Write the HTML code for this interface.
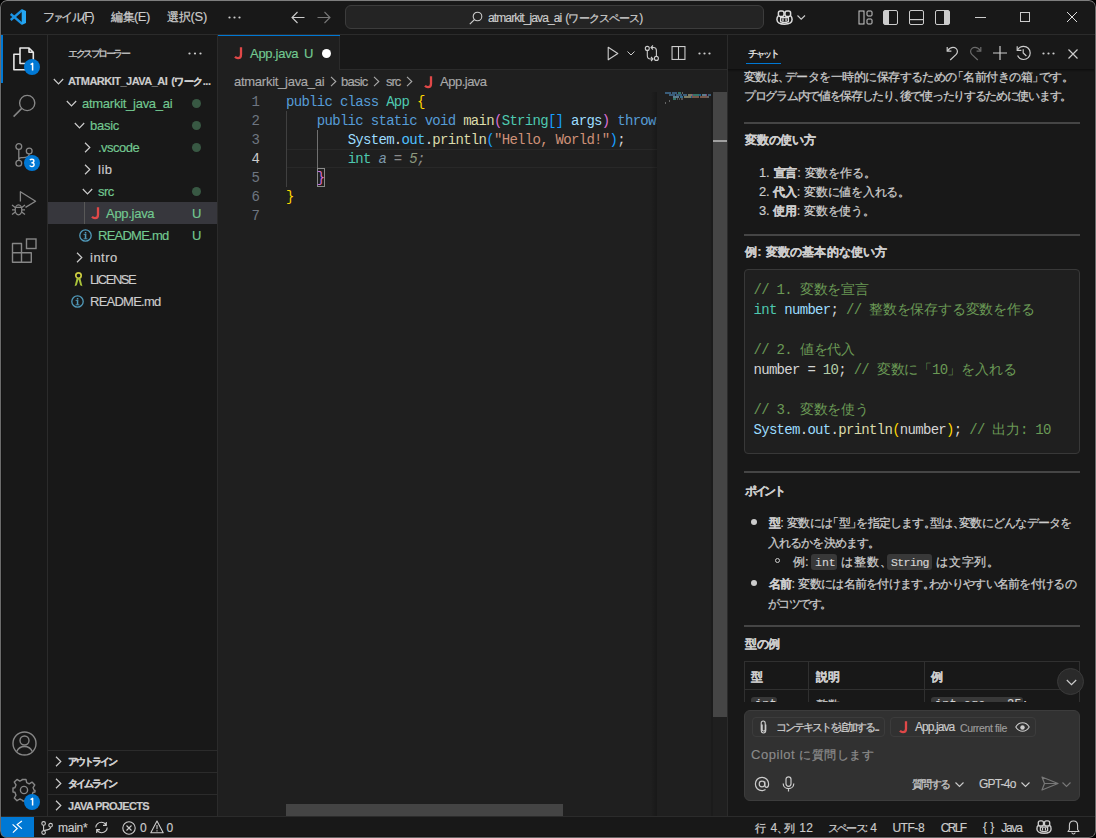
<!DOCTYPE html>
<html lang="ja">
<head>
<meta charset="utf-8">
<style>
html,body{margin:0;padding:0;background:#000;width:1096px;height:838px;overflow:hidden}
body{font-family:'Liberation Sans',sans-serif;font-size:13px;color:#ccc}
#win{position:absolute;left:0;top:0;width:1096px;height:838px;background:#181818;border-radius:7px;overflow:hidden}
.a{position:absolute}
.t{position:absolute;white-space:nowrap;-webkit-text-stroke:0.15px currentColor}
svg{position:absolute;overflow:visible}
.ln{position:absolute;left:222px;width:38px;text-align:right;color:#6e7681}
.j{font-size:0.92em;-webkit-text-stroke:0.25px currentColor}
.jm{font-size:14px;letter-spacing:-0.2px}
.sk{font-size:0.85em}
b .j{-webkit-text-stroke:0.2px currentColor}
.pr{margin-right:-0.4em}
.pl{margin-left:-0.4em}
.code{position:absolute;white-space:pre;font-family:'Liberation Mono',monospace}
</style>
</head>
<body>
<div id="win">
<!-- window frame -->
<div class="a" style="left:0;top:0;width:1096px;height:838px;box-sizing:border-box;border:1px solid #6c6c6c;border-top-color:#7e7e7e;border-bottom-color:#646464;border-radius:7px;z-index:50;pointer-events:none"></div>
<div class="a" style="left:1px;top:1px;width:1094px;height:836px;box-sizing:border-box;border:1px solid #131313;border-top-color:#1a1a1a;border-radius:6px"></div>

<!-- title bar border -->
<div class="a" style="left:0;top:34px;width:1096px;height:1px;background:#2b2b2b"></div>
<!-- activity bar border -->
<div class="a" style="left:47px;top:35px;width:1px;height:781px;background:#2b2b2b"></div>
<!-- sidebar border -->
<div class="a" style="left:217px;top:35px;width:1px;height:781px;background:#2b2b2b"></div>
<!-- editor area bg -->
<div class="a" style="left:218px;top:35px;width:509px;height:781px;background:#1f1f1f"></div>
<!-- tab bar bg -->
<div class="a" style="left:218px;top:35px;width:509px;height:34px;background:#181818;border-bottom:1px solid #2b2b2b"></div>
<!-- active tab -->
<div class="a" style="left:218px;top:35px;width:122px;height:35px;background:#1f1f1f;border-right:1px solid #2b2b2b;box-sizing:border-box"></div>
<div class="a" style="left:218px;top:35px;width:122px;height:1px;background:#0078d4"></div>
<!-- chat border -->
<div class="a" style="left:727px;top:35px;width:1px;height:781px;background:#2b2b2b"></div>
<!-- status bar -->
<div class="a" style="left:0;top:816px;width:1096px;height:1px;background:#2b2b2b"></div>
<div class="a" style="left:1px;top:817px;width:33px;height:21px;background:#0078d4"></div>


<!-- VS Code logo -->
<svg style="left:10px;top:9px" width="16" height="16" viewBox="0 0 16 16">
<path d="M12.2 1.2L0.7 11" stroke="#1b93e3" stroke-width="2.3"/>
<path d="M12.2 14.8L0.7 5" stroke="#1b93e3" stroke-width="2.3"/>
<path d="M11.7 0L16 2V13.9L11.7 16Z" fill="#24a6f2"/>
</svg>
<!-- menu dots -->
<svg style="left:228px;top:16px" width="13" height="3"><circle cx="1.5" cy="1.5" r="1.1" fill="#ccc"/><circle cx="6.5" cy="1.5" r="1.1" fill="#ccc"/><circle cx="11.5" cy="1.5" r="1.1" fill="#ccc"/></svg>
<!-- back / forward -->
<svg style="left:291px;top:11px" width="14" height="13" viewBox="0 0 14 13"><path d="M13.5 6.5H1 M6.5 1L1 6.5L6.5 12" stroke="#ccc" stroke-width="1.1" fill="none"/></svg>
<svg style="left:317px;top:11px" width="14" height="13" viewBox="0 0 14 13"><path d="M0.5 6.5H13 M7.5 1L13 6.5L7.5 12" stroke="#777" stroke-width="1.1" fill="none"/></svg>
<!-- command center -->
<div class="a" style="left:345px;top:5px;width:419px;height:24px;box-sizing:border-box;border:1px solid #3c3c3c;border-radius:6px;background:#242424"></div>
<svg style="left:469px;top:11px" width="14" height="14" viewBox="0 0 14 14"><circle cx="8.5" cy="5.5" r="4.3" stroke="#ccc" stroke-width="1.1" fill="none"/><path d="M5.4 8.6L0.8 13.2" stroke="#ccc" stroke-width="1.2"/></svg>
<!-- copilot icon -->
<svg style="left:776px;top:9.5px" width="17" height="15" viewBox="0 0 17 15">
<rect x="2.4" y="0.9" width="5.6" height="5.6" rx="2" stroke="#ddd" stroke-width="1.5" fill="none"/>
<rect x="9" y="0.9" width="5.6" height="5.6" rx="2" stroke="#ddd" stroke-width="1.5" fill="none"/>
<path d="M2.4 5.8C1.2 6.6 0.9 8 0.9 9.6C0.9 12.6 4.2 14.2 8.5 14.2C12.8 14.2 16.1 12.6 16.1 9.6C16.1 8 15.8 6.6 14.6 5.8" stroke="#ddd" stroke-width="1.5" fill="none"/>
<path d="M4.6 7.6H12.4V11.6C11 12.3 9.8 12.5 8.5 12.5C7.2 12.5 6 12.3 4.6 11.6Z" stroke="#ddd" stroke-width="1.3" fill="none"/>
<rect x="6.3" y="8.4" width="1.3" height="2.8" fill="#ddd"/><rect x="9.4" y="8.4" width="1.3" height="2.8" fill="#ddd"/>
</svg>
<svg style="left:797px;top:15px" width="9" height="5" viewBox="0 0 9 5"><path d="M0.5 0.5L4.2 4.2L8 0.5" stroke="#ccc" stroke-width="1.1" fill="none"/></svg>
<!-- layout icons -->
<svg style="left:858px;top:10px" width="15" height="15" viewBox="0 0 15 15"><rect x="1" y="1" width="5" height="13" stroke="#ccc" fill="none"/><rect x="9" y="1" width="5" height="5" rx="1" stroke="#ccc" fill="none"/><rect x="9" y="9" width="5" height="5" rx="1" stroke="#ccc" fill="none"/></svg>
<svg style="left:883px;top:10px" width="15" height="15" viewBox="0 0 15 15"><rect x="0.5" y="0.5" width="14" height="14" rx="1.5" stroke="#ccc" fill="none"/><rect x="1" y="1" width="5" height="13" fill="#ccc"/></svg>
<svg style="left:909px;top:10px" width="15" height="15" viewBox="0 0 15 15"><rect x="0.5" y="0.5" width="14" height="14" rx="1.5" stroke="#ccc" fill="none"/><rect x="1" y="9" width="13" height="1.2" fill="#ccc"/></svg>
<svg style="left:935px;top:10px" width="15" height="15" viewBox="0 0 15 15"><rect x="0.5" y="0.5" width="14" height="14" rx="1.5" stroke="#ccc" fill="none"/><rect x="9" y="1" width="5" height="13" fill="#ccc"/></svg>
<!-- window controls -->
<div class="a" style="left:975px;top:17px;width:11px;height:1px;background:#ccc"></div>
<div class="a" style="left:1020px;top:12px;width:10px;height:10px;box-sizing:border-box;border:1px solid #ccc"></div>
<svg style="left:1067px;top:12px" width="10" height="10" viewBox="0 0 10 10"><path d="M0 0L10 10M10 0L0 10" stroke="#ddd" stroke-width="1"/></svg>


<!-- activity bar -->
<div class="a" style="left:1px;top:35px;width:2px;height:48px;background:#0078d4"></div>
<svg style="left:12px;top:46px" width="24" height="26" viewBox="0 0 24 26">
<path d="M8 2H17L21.3 6.3V17.5H8Z M17 2V6.3H21.3" stroke="#e6e6e6" stroke-width="1.6" fill="none" stroke-linejoin="round"/>
<path d="M8 8.2H1.9V23.7H15V17.5" stroke="#e6e6e6" stroke-width="1.6" fill="none" stroke-linejoin="round"/>
</svg>
<svg style="left:24px;top:59px" width="16" height="16" viewBox="0 0 16 16"><circle cx="8" cy="8" r="8" fill="#0078d4"/><path d="M6.6 5.6L8.6 4.4V11.6" stroke="#fff" stroke-width="1.5" fill="none" stroke-linejoin="round"/></svg>
<svg style="left:12px;top:94px" width="24" height="26" viewBox="0 0 24 26">
<circle cx="15.2" cy="9" r="7.6" stroke="#868686" stroke-width="1.4" fill="none"/><path d="M9.8 14.4L1.6 22.6" stroke="#868686" stroke-width="1.5"/>
</svg>
<svg style="left:12px;top:142px" width="24" height="26" viewBox="0 0 24 26">
<circle cx="6.8" cy="4.5" r="2.9" stroke="#868686" stroke-width="1.3" fill="none"/>
<circle cx="17.2" cy="9" r="2.9" stroke="#868686" stroke-width="1.3" fill="none"/>
<circle cx="6.8" cy="21.2" r="2.9" stroke="#868686" stroke-width="1.3" fill="none"/>
<path d="M6.8 7.4V18.3 M17.2 11.9C17.2 14.8 15 15.6 11 15.6H9.5C8 15.6 6.8 16.5 6.8 18" stroke="#868686" stroke-width="1.3" fill="none"/>
</svg>
<svg style="left:24px;top:155px" width="16" height="16" viewBox="0 0 16 16"><circle cx="8" cy="8" r="8" fill="#0078d4"/><path d="M5.9 5.2C6.3 4.6 7 4.3 7.9 4.3C9.1 4.3 9.9 5 9.9 6C9.9 7 9.1 7.7 7.8 7.7H7.4 M7.8 7.7C9.3 7.7 10.1 8.5 10.1 9.6C10.1 10.8 9.2 11.6 7.9 11.6C6.9 11.6 6.1 11.2 5.7 10.5" stroke="#fff" stroke-width="1.4" fill="none"/></svg>
<svg style="left:11px;top:190px" width="26" height="27" viewBox="0 0 26 27">
<path d="M9.4 11.6V1.7L24.6 11.2L14.5 17.4" stroke="#868686" stroke-width="1.3" fill="none" stroke-linejoin="round"/>
<ellipse cx="7.5" cy="19.8" rx="3.3" ry="5" stroke="#868686" stroke-width="1.3" fill="none"/>
<path d="M4.5 17.4H10.5 M1 15L4.2 17.4 M1 19.8H4.2 M1 24.5L4.3 22 M14 15L10.8 17.4 M14 19.8H10.8 M14 24.5L10.7 22" stroke="#868686" stroke-width="1.3" fill="none"/>
</svg>
<svg style="left:11px;top:237px" width="26" height="27" viewBox="0 0 26 27">
<path d="M1.5 6.5H10.5V15.8H20.3V25.3H1.5Z M1.5 15.8H10.5V25.3" stroke="#868686" stroke-width="1.4" fill="none" stroke-linejoin="round"/>
<rect x="15.5" y="2" width="9.5" height="9.5" stroke="#868686" stroke-width="1.4" fill="none"/>
</svg>
<svg style="left:12px;top:731px" width="25" height="25" viewBox="0 0 25 25">
<circle cx="12.5" cy="12.5" r="11.5" stroke="#868686" stroke-width="1.4" fill="none"/>
<circle cx="12.5" cy="9.5" r="4.5" stroke="#868686" stroke-width="1.4" fill="none"/>
<path d="M4.8 20.5C6.5 16.5 9 15.5 12.5 15.5C16 15.5 18.5 16.5 20.2 20.5" stroke="#868686" stroke-width="1.4" fill="none"/>
</svg>
<svg style="left:12px;top:778px" width="24" height="24" viewBox="0 0 24 24">
<path d="M10 1.5H14L14.7 4.6L17.2 5.8L20 4.1L22.8 6.9L21.1 9.7L22.1 12.2L23 12.5V14L21.1 14.3L20 17.2L21.7 20L19 22.7L16.2 21L13.7 22.1L13 23H11L10.3 22.1L7.8 21L5 22.7L2.3 20L4 17.2L2.9 14.3L1 14V10L2.9 9.7L4 6.9L2.3 4.1L5 1.4L7.8 3.1L10.3 1.9Z" stroke="#868686" stroke-width="1.4" fill="none" stroke-linejoin="round"/>
<circle cx="12" cy="12" r="3.6" stroke="#868686" stroke-width="1.4" fill="none"/>
</svg>
<svg style="left:24px;top:794px" width="16" height="16" viewBox="0 0 16 16"><circle cx="8" cy="8" r="8" fill="#0078d4"/><path d="M6.6 5.6L8.6 4.4V11.6" stroke="#fff" stroke-width="1.5" fill="none" stroke-linejoin="round"/></svg>


<!-- sidebar -->
<svg style="left:188px;top:52px" width="14" height="3"><circle cx="1.5" cy="1.5" r="1.1" fill="#ccc"/><circle cx="7" cy="1.5" r="1.1" fill="#ccc"/><circle cx="12.5" cy="1.5" r="1.1" fill="#ccc"/></svg>
<div class="a" style="left:48px;top:202px;width:169px;height:22px;background:#37373d"></div>
<div class="a" style="left:84px;top:202px;width:1px;height:22px;background:#585858"></div>
<svg style="left:53px;top:77.5px" width="11" height="7" viewBox="0 0 11 7"><path d="M0.8 1L5.5 5.8L10.2 1" stroke="#ccc" stroke-width="1.2" fill="none"/></svg><svg style="left:65.5px;top:99.5px" width="11" height="7" viewBox="0 0 11 7"><path d="M0.8 1L5.5 5.8L10.2 1" stroke="#ccc" stroke-width="1.2" fill="none"/></svg><svg style="left:74px;top:121.5px" width="11" height="7" viewBox="0 0 11 7"><path d="M0.8 1L5.5 5.8L10.2 1" stroke="#ccc" stroke-width="1.2" fill="none"/></svg><svg style="left:84px;top:141.5px" width="7" height="11" viewBox="0 0 7 11"><path d="M1 0.8L5.8 5.5L1 10.2" stroke="#ccc" stroke-width="1.2" fill="none"/></svg><svg style="left:84px;top:163.5px" width="7" height="11" viewBox="0 0 7 11"><path d="M1 0.8L5.8 5.5L1 10.2" stroke="#ccc" stroke-width="1.2" fill="none"/></svg><svg style="left:82px;top:187.5px" width="11" height="7" viewBox="0 0 11 7"><path d="M0.8 1L5.5 5.8L10.2 1" stroke="#ccc" stroke-width="1.2" fill="none"/></svg><svg style="left:75.5px;top:251.5px" width="7" height="11" viewBox="0 0 7 11"><path d="M1 0.8L5.8 5.5L1 10.2" stroke="#ccc" stroke-width="1.2" fill="none"/></svg><div class="a" style="left:191.5px;top:98.5px;width:9px;height:9px;border-radius:50%;background:rgba(115,201,145,0.36)"></div><div class="a" style="left:191.5px;top:120.5px;width:9px;height:9px;border-radius:50%;background:rgba(115,201,145,0.36)"></div><div class="a" style="left:191.5px;top:142.5px;width:9px;height:9px;border-radius:50%;background:rgba(115,201,145,0.36)"></div><div class="a" style="left:191.5px;top:186.5px;width:9px;height:9px;border-radius:50%;background:rgba(115,201,145,0.36)"></div><svg style="left:91px;top:206px" width="10" height="14" viewBox="0 0 10 14"><path d="M7 1.2V8.8C7 11 5.9 12.2 4 12.2C2.8 12.2 1.8 11.7 1 10.8" stroke="#e04848" stroke-width="2.3" fill="none"/></svg><svg style="left:78.8px;top:228.5px" width="13" height="13" viewBox="0 0 13 13"><circle cx="6.5" cy="6.5" r="5.7" stroke="#519aba" stroke-width="1.3" fill="none"/><rect x="5.8" y="5.4" width="1.5" height="4.4" fill="#519aba"/><rect x="5.8" y="3" width="1.5" height="1.5" fill="#519aba"/><path d="M4.6 5.4H7.3 M4.6 9.8H8.4" stroke="#519aba" stroke-width="0.9"/></svg><svg style="left:71px;top:294.5px" width="13" height="13" viewBox="0 0 13 13"><circle cx="6.5" cy="6.5" r="5.7" stroke="#519aba" stroke-width="1.3" fill="none"/><rect x="5.8" y="5.4" width="1.5" height="4.4" fill="#519aba"/><rect x="5.8" y="3" width="1.5" height="1.5" fill="#519aba"/><path d="M4.6 5.4H7.3 M4.6 9.8H8.4" stroke="#519aba" stroke-width="0.9"/></svg><svg style="left:73.5px;top:271.5px" width="9" height="15" viewBox="0 0 9 15"><circle cx="4.5" cy="3.6" r="2.7" stroke="#cbcb41" stroke-width="1.7" fill="none"/><path d="M2.6 6.2L0.6 14.2L2.8 13.2L4.5 7.2L6.2 13.2L8.4 14.2L6.4 6.2Z" fill="#a8c23a"/></svg>
<div class="a" style="left:48px;top:750px;width:169px;height:1px;background:#2b2b2b"></div>
<div class="a" style="left:48px;top:772px;width:169px;height:1px;background:#2b2b2b"></div>
<div class="a" style="left:48px;top:794px;width:169px;height:1px;background:#2b2b2b"></div>
<svg style="left:55px;top:756.0px" width="7" height="11" viewBox="0 0 7 11"><path d="M1 0.8L5.8 5.5L1 10.2" stroke="#ccc" stroke-width="1.2" fill="none"/></svg><svg style="left:55px;top:778.0px" width="7" height="11" viewBox="0 0 7 11"><path d="M1 0.8L5.8 5.5L1 10.2" stroke="#ccc" stroke-width="1.2" fill="none"/></svg><svg style="left:55px;top:800.0px" width="7" height="11" viewBox="0 0 7 11"><path d="M1 0.8L5.8 5.5L1 10.2" stroke="#ccc" stroke-width="1.2" fill="none"/></svg>

<!-- editor tab -->
<svg style="left:234px;top:46px" width="10" height="14" viewBox="0 0 10 14"><path d="M7 1.2V8.8C7 11 5.9 12.2 4 12.2C2.8 12.2 1.8 11.7 1 10.8" stroke="#e04848" stroke-width="2.3" fill="none"/></svg><div class="a" style="left:321.5px;top:48.5px;width:9px;height:9px;border-radius:50%;background:#fff"></div>
<svg style="left:607px;top:46px" width="12" height="15" viewBox="0 0 12 15"><path d="M1.2 1.2L10.8 7.5L1.2 13.8Z" stroke="#ccc" stroke-width="1.1" fill="none" stroke-linejoin="round"/></svg>
<svg style="left:627px;top:51px" width="8" height="5" viewBox="0 0 8 5"><path d="M0.5 0.5L4 4L7.5 0.5" stroke="#ccc" stroke-width="1" fill="none"/></svg>
<svg style="left:644px;top:44px" width="16" height="18" viewBox="0 0 16 18">
<circle cx="3.3" cy="4.4" r="2" stroke="#ccc" stroke-width="1.1" fill="none"/><circle cx="12.4" cy="14.4" r="2" stroke="#ccc" stroke-width="1.1" fill="none"/>
<path d="M3.3 6.4V11.5C3.3 13.5 4.3 15 6.5 15H9 M7 13L9 15L7 17" stroke="#ccc" stroke-width="1.1" fill="none"/>
<path d="M12.4 12.4V6.5C12.4 4.5 11.4 3.5 9.5 3.5H7 M9 1.5L7 3.5L9 5.5" stroke="#ccc" stroke-width="1.1" fill="none"/>
</svg>
<svg style="left:671px;top:46px" width="15" height="14" viewBox="0 0 15 14"><rect x="1.05" y="0.55" width="12.9" height="12.9" stroke="#ccc" stroke-width="1.1" fill="none"/><path d="M7.5 0.5V13.5" stroke="#ccc" stroke-width="1.1"/></svg>
<svg style="left:698px;top:52px" width="13" height="3"><circle cx="1.5" cy="1.5" r="1.1" fill="#ccc"/><circle cx="6.5" cy="1.5" r="1.1" fill="#ccc"/><circle cx="11.5" cy="1.5" r="1.1" fill="#ccc"/></svg>
<svg style="left:329.5px;top:76.0px" width="7" height="11" viewBox="0 0 7 11"><path d="M1 0.8L5.8 5.5L1 10.2" stroke="#a9a9a9" stroke-width="1.1" fill="none"/></svg><svg style="left:373px;top:76.0px" width="7" height="11" viewBox="0 0 7 11"><path d="M1 0.8L5.8 5.5L1 10.2" stroke="#a9a9a9" stroke-width="1.1" fill="none"/></svg><svg style="left:406px;top:76.0px" width="7" height="11" viewBox="0 0 7 11"><path d="M1 0.8L5.8 5.5L1 10.2" stroke="#a9a9a9" stroke-width="1.1" fill="none"/></svg><svg style="left:424px;top:74.5px" width="10" height="14" viewBox="0 0 10 14"><path d="M7 1.2V8.8C7 11 5.9 12.2 4 12.2C2.8 12.2 1.8 11.7 1 10.8" stroke="#e04848" stroke-width="2.3" fill="none"/></svg><div class="a" style="left:286px;top:149px;width:371px;height:17px;border-top:1px solid #282828;border-bottom:1px solid #282828"></div><div class="a" style="left:286px;top:111px;width:1px;height:76px;background:#404040"></div><div class="a" style="left:317px;top:130px;width:1px;height:38px;background:#707070"></div><div class="a" style="left:317px;top:168px;width:8px;height:19px;box-sizing:border-box;border:1px solid #8a8a8a"></div><div class="ln code" style="top:92.5px;line-height:19px;font-size:14px;color:#6e7681">1</div><div class="ln code" style="top:111.5px;line-height:19px;font-size:14px;color:#6e7681">2</div><div class="ln code" style="top:130.5px;line-height:19px;font-size:14px;color:#6e7681">3</div><div class="ln code" style="top:149.5px;line-height:19px;font-size:14px;color:#cccccc">4</div><div class="ln code" style="top:168.5px;line-height:19px;font-size:14px;color:#6e7681">5</div><div class="ln code" style="top:187.5px;line-height:19px;font-size:14px;color:#6e7681">6</div><div class="ln code" style="top:206.5px;line-height:19px;font-size:14px;color:#6e7681">7</div><div class="code" style="left:286px;top:92.5px;width:371px;height:160px;overflow:hidden;font-size:14px;letter-spacing:-0.7px;line-height:19px;color:#d4d4d4"><span style="color:#569cd6">public</span> <span style="color:#569cd6">class</span> <span style="color:#4ec9b0">App</span> <span style="color:#ffd700">{</span>
    <span style="color:#569cd6">public</span> <span style="color:#569cd6">static</span> <span style="color:#569cd6">void</span> <span style="color:#dcdcaa">main</span><span style="color:#da70d6">(</span><span style="color:#4ec9b0">String</span><span style="color:#179fff">[]</span> <span style="color:#9cdcfe">args</span><span style="color:#da70d6">)</span> <span style="color:#569cd6">throws</span>
        <span style="color:#9cdcfe">System</span><span style="color:#d4d4d4">.</span><span style="color:#4fc1ff">out</span><span style="color:#d4d4d4">.</span><span style="color:#dcdcaa">println</span><span style="color:#179fff">(</span><span style="color:#ce9178">"Hello, World!"</span><span style="color:#179fff">)</span><span style="color:#d4d4d4">;</span>
        <span style="color:#4ec9b0">int</span><span style="font-style:italic;color:#8a8a8a"> <span style="color:#7d99ab">a</span> = <span style="color:#8d9a7e">5</span>;</span>
    <span style="color:#da70d6">}</span>
<span style="color:#ffd700">}</span>
</div><div class="a" style="left:651px;top:92px;width:6px;height:724px;background:linear-gradient(to right,rgba(0,0,0,0),rgba(0,0,0,0.22))"></div><div class="a" style="left:665px;top:92px;width:6px;height:2px;background:#569cd6;opacity:.5"></div><div class="a" style="left:672px;top:92px;width:5px;height:2px;background:#569cd6;opacity:.5"></div><div class="a" style="left:678px;top:92px;width:3px;height:2px;background:#4ec9b0;opacity:.5"></div><div class="a" style="left:682px;top:92px;width:1px;height:2px;background:#aaa;opacity:.5"></div><div class="a" style="left:669px;top:94px;width:6px;height:2px;background:#569cd6;opacity:.5"></div><div class="a" style="left:676px;top:94px;width:6px;height:2px;background:#569cd6;opacity:.5"></div><div class="a" style="left:683px;top:94px;width:4px;height:2px;background:#569cd6;opacity:.5"></div><div class="a" style="left:688px;top:94px;width:4px;height:2px;background:#dcdcaa;opacity:.5"></div><div class="a" style="left:692px;top:94px;width:1px;height:2px;background:#da70d6;opacity:.5"></div><div class="a" style="left:693px;top:94px;width:6px;height:2px;background:#4ec9b0;opacity:.5"></div><div class="a" style="left:699px;top:94px;width:2px;height:2px;background:#179fff;opacity:.5"></div><div class="a" style="left:702px;top:94px;width:4px;height:2px;background:#9cdcfe;opacity:.5"></div><div class="a" style="left:706px;top:94px;width:1px;height:2px;background:#da70d6;opacity:.5"></div><div class="a" style="left:708px;top:94px;width:5px;height:2px;background:#569cd6;opacity:.5"></div><div class="a" style="left:673px;top:96px;width:6px;height:2px;background:#9cdcfe;opacity:.5"></div><div class="a" style="left:680px;top:96px;width:3px;height:2px;background:#4fc1ff;opacity:.5"></div><div class="a" style="left:684px;top:96px;width:7px;height:2px;background:#dcdcaa;opacity:.5"></div><div class="a" style="left:691px;top:96px;width:1px;height:2px;background:#179fff;opacity:.5"></div><div class="a" style="left:692px;top:96px;width:7px;height:2px;background:#ce9178;opacity:.5"></div><div class="a" style="left:700px;top:96px;width:7px;height:2px;background:#ce9178;opacity:.5"></div><div class="a" style="left:707px;top:96px;width:2px;height:2px;background:#aaa;opacity:.5"></div><div class="a" style="left:673px;top:98px;width:3px;height:2px;background:#4ec9b0;opacity:.5"></div><div class="a" style="left:677px;top:98px;width:1px;height:2px;background:#888;opacity:.5"></div><div class="a" style="left:679px;top:98px;width:1px;height:2px;background:#888;opacity:.5"></div><div class="a" style="left:681px;top:98px;width:1px;height:2px;background:#888;opacity:.5"></div><div class="a" style="left:682px;top:98px;width:1px;height:2px;background:#888;opacity:.5"></div><div class="a" style="left:669px;top:100px;width:1px;height:2px;background:#aaa;opacity:.5"></div><div class="a" style="left:665px;top:102px;width:1px;height:2px;background:#aaa;opacity:.5"></div>
<div class="a" style="left:711px;top:92px;width:2px;height:724px;background:#1b1b1b"></div><div class="a" style="left:713px;top:92px;width:14px;height:625px;background:#454545"></div><div class="a" style="left:713px;top:140px;width:14px;height:2px;background:#a0a0a0"></div><div class="a" style="left:286px;top:804px;width:277px;height:12px;background:#444444"></div>

<!-- chat header -->
<div class="a" style="left:728px;top:69px;width:366px;height:3px;background:linear-gradient(to bottom,rgba(0,0,0,.45),rgba(0,0,0,0))"></div>
<div class="a" style="left:728px;top:35px;width:366px;height:34px;background:#181818"></div>
<div class="a" style="left:746px;top:63px;width:35px;height:1px;background:#0078d4"></div>
<svg style="left:946px;top:46px" width="13" height="15" viewBox="0 0 13 15"><path d="M1.2 1V5.2H5.4" stroke="#ccc" stroke-width="1.2" fill="none"/><path d="M1.5 4.8C3 2.6 4.8 1.4 7 1.4C9.6 1.4 11.4 3.3 11.4 5.6C11.4 6.7 10.9 7.6 10.2 8.4L4.2 14" stroke="#ccc" stroke-width="1.2" fill="none"/></svg>
<svg style="left:969px;top:46px" width="13" height="15" viewBox="0 0 13 15"><g transform="translate(13,0) scale(-1,1)"><path d="M1.2 1V5.2H5.4" stroke="#6b6b6b" stroke-width="1.2" fill="none"/><path d="M1.5 4.8C3 2.6 4.8 1.4 7 1.4C9.6 1.4 11.4 3.3 11.4 5.6C11.4 6.7 10.9 7.6 10.2 8.4L4.2 14" stroke="#6b6b6b" stroke-width="1.2" fill="none"/></g></svg>
<svg style="left:993px;top:46px" width="14" height="14" viewBox="0 0 14 14"><path d="M7 0V14 M0 7H14" stroke="#ccc" stroke-width="1.2"/></svg>
<svg style="left:1016px;top:45px" width="16" height="16" viewBox="0 0 16 16"><path d="M1.6 4.8C2.8 2.6 5 1.3 7.6 1.3C11.3 1.3 14.2 4.2 14.2 7.9C14.2 11.6 11.3 14.5 7.6 14.5C4.8 14.5 2.6 12.9 1.6 10.6" stroke="#ccc" stroke-width="1.2" fill="none"/><path d="M1.2 1.2V5.4H5.4" stroke="#ccc" stroke-width="1.2" fill="none"/><path d="M7.2 4.2V8L10.4 11" stroke="#ccc" stroke-width="1.2" fill="none"/></svg>
<svg style="left:1042px;top:51.5px" width="13" height="3"><circle cx="1.5" cy="1.5" r="1.1" fill="#ccc"/><circle cx="6.5" cy="1.5" r="1.1" fill="#ccc"/><circle cx="11.5" cy="1.5" r="1.1" fill="#ccc"/></svg>
<svg style="left:1068px;top:48.5px" width="10" height="10" viewBox="0 0 10 10"><path d="M0.5 0.5L9.5 9.5M9.5 0.5L0.5 9.5" stroke="#ccc" stroke-width="1.2"/></svg>
<!-- chat content -->
<div class="a" style="left:744px;top:121.5px;width:336px;height:2px;background:#454545"></div>
<div class="a" style="left:744px;top:233.5px;width:336px;height:2px;background:#454545"></div>
<div class="a" style="left:744px;top:470.5px;width:336px;height:2px;background:#454545"></div>
<div class="a" style="left:744px;top:625px;width:336px;height:2px;background:#454545"></div>
<div class="a" style="left:744px;top:269px;width:336px;height:185px;box-sizing:border-box;border:1px solid #383838;border-radius:4px;background:#1f1f1f"></div>
<div class="a" style="left:751px;top:519px;width:6px;height:6px;border-radius:50%;background:#ccc"></div>
<div class="a" style="left:751px;top:580px;width:6px;height:6px;border-radius:50%;background:#ccc"></div>
<div class="a" style="left:774.5px;top:557.5px;width:5px;height:5px;border-radius:50%;box-sizing:border-box;border:1px solid #ccc"></div>
<div class="a" style="left:811px;top:554px;width:26px;height:16px;border-radius:3px;background:#383838"></div>
<div class="a" style="left:887px;top:554px;width:45px;height:16px;border-radius:3px;background:#383838"></div>
<!-- table -->
<div class="a" style="left:744px;top:661px;width:336px;height:41px;overflow:hidden">
<div class="a" style="left:0;top:0;width:336px;height:60px;box-sizing:border-box;border:1px solid #303030"></div>
<div class="a" style="left:0;top:28px;width:336px;height:1px;background:#303030"></div>
<div class="a" style="left:64px;top:0;width:1px;height:60px;background:#303030"></div>
<div class="a" style="left:180px;top:0;width:1px;height:60px;background:#303030"></div>
<div class="a" style="left:7px;top:36px;width:26px;height:16px;border-radius:3px;background:#383838"></div>
<div class="a" style="left:187px;top:36px;width:92px;height:16px;border-radius:3px;background:#383838"></div>
<div class="t" style="left:11px;top:37px;font-family:'Liberation Mono',monospace;font-size:12px;color:#d4d4d4">int</div>
<div class="t" style="left:72px;top:36px;color:#ccc"><span class="j">整数</span></div>
<div class="t" style="left:191px;top:37px;font-family:'Liberation Mono',monospace;font-size:12px;color:#d4d4d4">int age = 25;</div>
</div>
<!-- header shadow -->

<!-- scroll down button -->
<div class="a" style="left:1057px;top:668px;width:27px;height:27px;box-sizing:border-box;border-radius:50%;background:#2a2a2a;border:1px solid #3a3a3a"></div>
<svg style="left:1065.5px;top:678.5px" width="11" height="7" viewBox="0 0 11 7"><path d="M0.8 1L5.5 5.6L10.2 1" stroke="#ccc" stroke-width="1.2" fill="none"/></svg>
<!-- input -->
<div class="a" style="left:744px;top:710px;width:336px;height:91px;box-sizing:border-box;border:1px solid #3c3c3c;border-radius:6px;background:#313131"></div>
<div class="a" style="left:751.5px;top:717px;width:133px;height:20px;box-sizing:border-box;border:1px solid #3c3c3c;border-radius:4px"></div>
<div class="a" style="left:889.5px;top:717px;width:146px;height:20px;box-sizing:border-box;border:1px solid #3c3c3c;border-radius:4px"></div>
<svg style="left:759px;top:720px" width="9" height="14" viewBox="0 0 9 14"><path d="M6.8 4.5V10C6.8 11.8 5.9 13 4.5 13C3.1 13 2.2 11.8 2.2 10V3.3C2.2 2 3 1 4.2 1C5.4 1 6.2 2 6.2 3.3V9.6C6.2 10.4 5.6 11 4.6 11C3.6 11 3.2 10.4 3.2 9.6V4.5" stroke="#ccc" stroke-width="1.1" fill="none"/></svg>
<svg style="left:899px;top:720px" width="10" height="14" viewBox="0 0 10 14"><path d="M7 1.2V8.8C7 11 5.9 12.2 4 12.2C2.8 12.2 1.8 11.7 1 10.8" stroke="#e04848" stroke-width="2.3" fill="none"/></svg>
<svg style="left:1015px;top:722px" width="15" height="10" viewBox="0 0 15 10"><path d="M0.8 5C2.5 2 4.8 0.8 7.5 0.8C10.2 0.8 12.5 2 14.2 5C12.5 8 10.2 9.2 7.5 9.2C4.8 9.2 2.5 8 0.8 5Z" stroke="#ccc" stroke-width="1.1" fill="none"/><circle cx="7.5" cy="5.5" r="2.2" fill="#ccc"/></svg>
<svg style="left:754px;top:776px" width="16" height="16" viewBox="0 0 16 16"><circle cx="8" cy="8" r="2.8" stroke="#ccc" stroke-width="1.2" fill="none"/><path d="M10.8 5.5V9.3C10.8 10.6 11.6 11.3 12.6 11.3C13.8 11.3 14.6 10 14.6 8C14.6 4.2 11.8 1.4 8 1.4C4.2 1.4 1.4 4.2 1.4 8C1.4 11.8 4.2 14.6 8 14.6C9.4 14.6 10.5 14.3 11.5 13.6" stroke="#ccc" stroke-width="1.2" fill="none"/></svg>
<svg style="left:782px;top:776px" width="13" height="16" viewBox="0 0 13 16"><rect x="4" y="0.8" width="5" height="9.5" rx="2.5" stroke="#ccc" stroke-width="1.2" fill="none"/><path d="M1.2 7.5C1.2 10.5 3.5 12.6 6.5 12.6C9.5 12.6 11.8 10.5 11.8 7.5 M6.5 12.6V15.5" stroke="#ccc" stroke-width="1.2" fill="none"/></svg>
<svg style="left:955px;top:781.5px" width="9" height="5" viewBox="0 0 9 5"><path d="M0.5 0.5L4.5 4.5L8.5 0.5" stroke="#ccc" stroke-width="1.1" fill="none"/></svg>
<svg style="left:1021px;top:781.5px" width="9" height="5" viewBox="0 0 9 5"><path d="M0.5 0.5L4.5 4.5L8.5 0.5" stroke="#ccc" stroke-width="1.1" fill="none"/></svg>
<svg style="left:1041px;top:776px" width="18" height="15" viewBox="0 0 18 15"><path d="M1 1L17 7.5L1 14L3.5 7.5Z M3.5 7.5H17" stroke="#777" stroke-width="1.2" fill="none" stroke-linejoin="round"/></svg>
<svg style="left:1062px;top:781.5px" width="9" height="5" viewBox="0 0 9 5"><path d="M0.5 0.5L4.5 4.5L8.5 0.5" stroke="#777" stroke-width="1.1" fill="none"/></svg>


<!-- status bar icons -->
<svg style="left:11px;top:819px" width="13" height="16" viewBox="0 0 13 16"><path d="M1.6 5.4L6.2 9.5L1.9 13.6 M10.9 2L6.2 5.6L10.9 9.7" stroke="#fff" stroke-width="1.2" fill="none"/></svg>
<svg style="left:41px;top:821px" width="12" height="14" viewBox="0 0 12 14"><circle cx="2.6" cy="2.4" r="1.8" stroke="#ccc" stroke-width="1.1" fill="none"/><circle cx="2.6" cy="11.6" r="1.8" stroke="#ccc" stroke-width="1.1" fill="none"/><circle cx="9.6" cy="4.2" r="1.8" stroke="#ccc" stroke-width="1.1" fill="none"/><path d="M2.6 4.2V9.8 M9.6 6C9.6 8.2 8 8.8 2.8 9.6" stroke="#ccc" stroke-width="1.1" fill="none"/></svg>
<svg style="left:94px;top:821px" width="15" height="13" viewBox="0 0 15 13"><path d="M1.8 6.5C1.8 3.6 4.3 1.3 7.3 1.3C9.4 1.3 11.1 2.3 12 3.9 M13.2 6.5C13.2 9.4 10.7 11.7 7.7 11.7C5.6 11.7 3.9 10.7 3 9.1 M12.3 1V4.4H9 M2.7 12V8.6H6" stroke="#ccc" stroke-width="1.1" fill="none"/></svg>
<svg style="left:122px;top:821px" width="14" height="14" viewBox="0 0 14 14"><circle cx="7" cy="7" r="6.2" stroke="#ccc" stroke-width="1.1" fill="none"/><path d="M4.5 4.5L9.5 9.5M9.5 4.5L4.5 9.5" stroke="#ccc" stroke-width="1.1"/></svg>
<svg style="left:150px;top:820px" width="14" height="14" viewBox="0 0 14 14"><path d="M7 1L13.2 12.8H0.8Z" stroke="#ccc" stroke-width="1.1" fill="none" stroke-linejoin="round"/><path d="M7 5V9.3 M7 10.3V11.5" stroke="#ccc" stroke-width="1.1"/></svg>
<svg style="left:1036px;top:820px" width="16" height="14" viewBox="0 0 17 15" >
<rect x="2.4" y="0.9" width="5.6" height="5.6" rx="2" stroke="#ccc" stroke-width="1.5" fill="none"/>
<rect x="9" y="0.9" width="5.6" height="5.6" rx="2" stroke="#ccc" stroke-width="1.5" fill="none"/>
<path d="M2.4 5.8C1.2 6.6 0.9 8 0.9 9.6C0.9 12.6 4.2 14.2 8.5 14.2C12.8 14.2 16.1 12.6 16.1 9.6C16.1 8 15.8 6.6 14.6 5.8" stroke="#ccc" stroke-width="1.5" fill="none"/>
<path d="M4.6 7.6H12.4V11.6C11 12.3 9.8 12.5 8.5 12.5C7.2 12.5 6 12.3 4.6 11.6Z" stroke="#ccc" stroke-width="1.3" fill="none"/>
<rect x="6.3" y="8.4" width="1.3" height="2.8" fill="#ccc"/><rect x="9.4" y="8.4" width="1.3" height="2.8" fill="#ccc"/>
</svg>
<svg style="left:1067px;top:820px" width="13" height="15" viewBox="0 0 13 15"><path d="M6.5 1C9 1 10.6 2.8 10.6 5.5V9.5L12 11.5H1L2.4 9.5V5.5C2.4 2.8 4 1 6.5 1Z M4.8 12.5C5 13.5 5.7 14 6.5 14C7.3 14 8 13.5 8.2 12.5" stroke="#ccc" stroke-width="1.1" fill="none" stroke-linejoin="round"/></svg>

<div class="code" style="left:753.5px;top:280.0px;height:20px;font-size:14px;letter-spacing:-0.7px;line-height:20px;color:#d4d4d4"><span style="color:#6a9955">// 1. <span class="jm">変数を宣言</span></span></div>
<div class="code" style="left:753.5px;top:300.0px;height:20px;font-size:14px;letter-spacing:-0.7px;line-height:20px;color:#d4d4d4"><span style="color:#4ec9b0">int</span> <span style="color:#9cdcfe">number</span>; <span style="color:#6a9955">// <span class="jm">整数を保存する変数を作る</span></span></div>
<div class="code" style="left:753.5px;top:340.0px;height:20px;font-size:14px;letter-spacing:-0.7px;line-height:20px;color:#d4d4d4"><span style="color:#6a9955">// 2. <span class="jm">値を代入</span></span></div>
<div class="code" style="left:753.5px;top:360.0px;height:20px;font-size:14px;letter-spacing:-0.7px;line-height:20px;color:#d4d4d4"><span style="color:#d4d4d4">number</span> = <span style="color:#b5cea8">10</span>; <span style="color:#6a9955">// <span class="jm">変数に「</span>10<span class="jm">」を入れる</span></span></div>
<div class="code" style="left:753.5px;top:400.0px;height:20px;font-size:14px;letter-spacing:-0.7px;line-height:20px;color:#d4d4d4"><span style="color:#6a9955">// 3. <span class="jm">変数を使う</span></span></div>
<div class="code" style="left:753.5px;top:420.0px;height:20px;font-size:14px;letter-spacing:-0.7px;line-height:20px;color:#d4d4d4"><span style="color:#9cdcfe">System</span>.<span style="color:#9cdcfe">out</span>.<span style="color:#dcdcaa">println</span><span style="color:#ffd700">(</span><span style="color:#d4d4d4">number</span><span style="color:#ffd700">)</span>; <span style="color:#6a9955">// <span class="jm">出力</span>: 10</span></div>

<div class="t" id="t0" style="left:43.00px;top:9.0px;line-height:16px;letter-spacing:-1.833px;color:#ccc"><span class="j">フ<span class="sk">ァ</span>イル</span>(F)</div>
<div class="t" id="t1" style="left:111.00px;top:9.0px;line-height:16px;letter-spacing:-0.500px;color:#ccc"><span class="j">編集</span>(E)</div>
<div class="t" id="t2" style="left:167.00px;top:9.0px;line-height:16px;letter-spacing:-0.250px;color:#ccc"><span class="j">選択</span>(S)</div>
<div class="t" id="t3" style="left:488.00px;top:9.5px;line-height:16px;letter-spacing:-0.880px;color:#ccc;font-size:12px">atmarkit_java_ai<span style="display:inline-block;width:4px"></span>(<span class="j">ワークスペース</span>)</div>
<div class="t" id="t4" style="left:68.00px;top:45.0px;line-height:16px;letter-spacing:-2.429px;color:#ccc;font-size:11px"><span class="j">エクスプローラー</span></div>
<div class="t" id="t5" style="left:68.00px;top:73.0px;line-height:16px;letter-spacing:-0.522px;color:#ccc;font-size:11px;font-weight:bold">ATMARKIT_JAVA_AI<span style="display:inline-block;width:4px"></span>(<span class="j">ワーク</span>...</div>
<div class="t" id="t6" style="left:82.00px;top:96.0px;line-height:16px;letter-spacing:-0.267px;color:#73c991">atmarkit_java_ai</div>
<div class="t" id="t7" style="left:90.00px;top:118.0px;line-height:16px;letter-spacing:-0.250px;color:#73c991">basic</div>
<div class="t" id="t8" style="left:98.00px;top:140.0px;line-height:16px;letter-spacing:-0.500px;color:#73c991">.vscode</div>
<div class="t" id="t9" style="left:98.00px;top:162.0px;line-height:16px;letter-spacing:0.500px;color:#ccc">lib</div>
<div class="t" id="t10" style="left:98.00px;top:184.0px;line-height:16px;letter-spacing:-0.500px;color:#73c991">src</div>
<div class="t" id="t11" style="left:106.00px;top:206.0px;line-height:16px;letter-spacing:-0.286px;color:#73c991">App.java</div>
<div class="t" id="t12" style="left:192.00px;top:206.0px;line-height:16px;color:#73c991">U</div>
<div class="t" id="t13" style="left:98.00px;top:228.0px;line-height:16px;letter-spacing:-0.750px;color:#73c991">README.md</div>
<div class="t" id="t14" style="left:192.00px;top:228.0px;line-height:16px;color:#73c991">U</div>
<div class="t" id="t15" style="left:90.00px;top:250.0px;line-height:16px;letter-spacing:0.500px;color:#ccc">intro</div>
<div class="t" id="t16" style="left:90.00px;top:272.0px;line-height:16px;letter-spacing:-1.500px;color:#ccc">LICENSE</div>
<div class="t" id="t17" style="left:90.00px;top:294.0px;line-height:16px;letter-spacing:-0.750px;color:#ccc">README.md</div>
<div class="t" id="t18" style="left:68.00px;top:753.0px;line-height:16px;letter-spacing:-2.000px;color:#ccc;font-size:11px;font-weight:bold"><span class="j">アウトライン</span></div>
<div class="t" id="t19" style="left:68.00px;top:775.0px;line-height:16px;letter-spacing:-2.000px;color:#ccc;font-size:11px;font-weight:bold"><span class="j">タイムライン</span></div>
<div class="t" id="t20" style="left:68.00px;top:798.0px;line-height:16px;letter-spacing:-0.667px;color:#ccc;font-size:11px;font-weight:bold">JAVA PROJECTS</div>
<div class="t" id="t21" style="left:250.00px;top:46.0px;line-height:16px;letter-spacing:-0.286px;color:#73c991">App.java</div>
<div class="t" id="t22" style="left:304.00px;top:46.0px;line-height:16px;color:#73c991">U</div>
<div class="t" id="t23" style="left:234.00px;top:74.0px;line-height:16px;letter-spacing:-0.267px;color:#a9a9a9">atmarkit_java_ai</div>
<div class="t" id="t24" style="left:341.00px;top:74.0px;line-height:16px;letter-spacing:-0.750px;color:#a9a9a9">basic</div>
<div class="t" id="t25" style="left:386.00px;top:74.0px;line-height:16px;letter-spacing:-1.000px;color:#a9a9a9">src</div>
<div class="t" id="t26" style="left:440.00px;top:74.0px;line-height:16px;letter-spacing:-0.500px;color:#a9a9a9">App.java</div>
<div class="t" id="t27" style="left:748.00px;top:45.0px;line-height:16px;letter-spacing:-2.000px;color:#e7e7e7;font-size:11px"><span class="j">チ<span class="sk">ャ</span><span class="sk">ッ</span>ト</span></div>
<div class="t" id="t28" style="left:744.00px;top:67.0px;line-height:19px;letter-spacing:-0.552px;color:#cccccc"><span class="j">変数は<span class="pr">、</span>データを一時的に保存するための<span class="pl">「</span>名前付きの箱<span class="pr">」</span>です<span class="pr">。</span></span></div>
<div class="t" id="t29" style="left:744.00px;top:86.0px;line-height:19px;letter-spacing:-1.300px;color:#cccccc"><span class="j">プログラム内で値を保存したり<span class="pr">、</span>後で使ったりするために使います<span class="pr">。</span></span></div>
<div class="t" id="t30" style="left:745.00px;top:129.5px;line-height:19px;letter-spacing:-0.200px;color:#cccccc"><b><span class="j">変数の使い方</span></b></div>
<div class="t" id="t31" style="left:759.00px;top:162.5px;line-height:19px;letter-spacing:-0.167px;color:#cccccc">1.<span style="display:inline-block;width:4px"></span><b><span class="j">宣言</span></b>:<span style="display:inline-block;width:4px"></span><span class="j">変数を作る<span class="pr">。</span></span></div>
<div class="t" id="t32" style="left:759.00px;top:181.5px;line-height:19px;letter-spacing:-0.267px;color:#cccccc">2.<span style="display:inline-block;width:4px"></span><b><span class="j">代入</span></b>:<span style="display:inline-block;width:4px"></span><span class="j">変数に値を入れる<span class="pr">。</span></span></div>
<div class="t" id="t33" style="left:759.00px;top:200.5px;line-height:19px;letter-spacing:-0.250px;color:#cccccc">3.<span style="display:inline-block;width:4px"></span><b><span class="j">使用</span></b>:<span style="display:inline-block;width:4px"></span><span class="j">変数を使う<span class="pr">。</span></span></div>
<div class="t" id="t34" style="left:745.00px;top:241.5px;line-height:19px;letter-spacing:0.167px;color:#cccccc"><b><span class="j">例</span>:<span style="display:inline-block;width:4px"></span><span class="j">変数の基本的な使い方</span></b></div>
<div class="t" id="t35" style="left:745.00px;top:480.5px;line-height:19px;letter-spacing:-2.333px;color:#cccccc"><b><span class="j">ポイント</span></b></div>
<div class="t" id="t36" style="left:769.00px;top:513.0px;line-height:19px;letter-spacing:-0.759px;color:#cccccc"><b><span class="j">型</span></b>:<span style="display:inline-block;width:4px"></span><span class="j">変数には<span class="pl">「</span>型<span class="pr">」</span>を指定します<span class="pr">。</span>型は<span class="pr">、</span>変数にどんなデータを</span></div>
<div class="t" id="t37" style="left:768.00px;top:532.5px;line-height:19px;letter-spacing:-0.889px;color:#cccccc"><span class="j">入れるかを決めます<span class="pr">。</span></span></div>
<div class="t" id="t38" style="left:793.00px;top:552.0px;line-height:19px;color:#cccccc"><span class="j">例</span>:</div>
<div class="t" id="t39" style="left:841.00px;top:552.0px;line-height:19px;letter-spacing:1.000px;color:#cccccc"><span class="j">は整数<span class="pr">、</span></span></div>
<div class="t" id="t40" style="left:936.00px;top:552.0px;line-height:19px;letter-spacing:0.750px;color:#cccccc"><span class="j">は文字列<span class="pr">。</span></span></div>
<div class="t" id="t41" style="left:769.00px;top:574.1px;line-height:19px;letter-spacing:-0.714px;color:#cccccc"><b><span class="j">名前</span></b>:<span style="display:inline-block;width:4px"></span><span class="j">変数には名前を付けます<span class="pr">。</span>わかりやすい名前を付けるの</span></div>
<div class="t" id="t42" style="left:768.00px;top:593.5px;line-height:19px;letter-spacing:-1.600px;color:#cccccc"><span class="j">がコツです<span class="pr">。</span></span></div>
<div class="t" id="t43" style="left:745.00px;top:633.5px;line-height:19px;letter-spacing:-0.500px;color:#cccccc"><b><span class="j">型の例</span></b></div>
<div class="t" id="t44" style="left:751.00px;top:666.5px;line-height:19px;color:#cccccc"><b><span class="j">型</span></b></div>
<div class="t" id="t45" style="left:816.00px;top:666.5px;line-height:19px;color:#cccccc"><b><span class="j">説明</span></b></div>
<div class="t" id="t46" style="left:931.00px;top:666.5px;line-height:19px;color:#cccccc"><b><span class="j">例</span></b></div>
<div class="t" id="t47" style="left:815.00px;top:555.0px;line-height:16px;color:#d4d4d4;font-family:'Liberation Mono',monospace;font-size:11.5px">int</div>
<div class="t" id="t48" style="left:891.00px;top:555.0px;line-height:16px;letter-spacing:-0.600px;color:#d4d4d4;font-family:'Liberation Mono',monospace;font-size:11.5px">String</div>
<div class="t" id="t49" style="left:776.00px;top:719.0px;line-height:16px;letter-spacing:-2.077px;color:#ccc;font-size:12px"><span class="j">コンテキストを追加する</span>...</div>
<div class="t" id="t50" style="left:915.00px;top:719.0px;line-height:16px;letter-spacing:-0.929px;color:#ccc;font-size:12px">App.java</div>
<div class="t" id="t51" style="left:960.00px;top:720.0px;line-height:16px;letter-spacing:-0.364px;color:#9d9d9d;font-size:10.5px">Current file</div>
<div class="t" id="t52" style="left:751.00px;top:747.0px;line-height:16px;letter-spacing:0.538px;color:#8b8b8b">Copilot<span style="display:inline-block;width:4px"></span><span class="j">に質問します</span></div>
<div class="t" id="t53" style="left:912.00px;top:776.0px;line-height:16px;letter-spacing:-1.667px;color:#ccc;font-size:12px"><span class="j">質問する</span></div>
<div class="t" id="t54" style="left:979.00px;top:776.0px;line-height:16px;letter-spacing:-0.800px;color:#ccc;font-size:12px">GPT-4o</div>
<div class="t" id="t55" style="left:58.00px;top:819.5px;line-height:16px;letter-spacing:-0.250px;color:#cccccc;font-size:12px">main*</div>
<div class="t" id="t56" style="left:140.00px;top:819.5px;line-height:16px;color:#cccccc;font-size:12px">0</div>
<div class="t" id="t57" style="left:166.60px;top:819.5px;line-height:16px;color:#cccccc;font-size:12px">0</div>
<div class="t" id="t58" style="left:755.40px;top:819.5px;line-height:16px;letter-spacing:0.171px;color:#cccccc;font-size:12px"><span class="j">行</span><span style="display:inline-block;width:4px"></span>4<span class="j"><span class="pr">、</span>列</span><span style="display:inline-block;width:4px"></span>12</div>
<div class="t" id="t59" style="left:828.00px;top:819.5px;line-height:16px;letter-spacing:-1.833px;color:#cccccc;font-size:12px"><span class="j">スペース</span>:<span style="display:inline-block;width:4px"></span>4</div>
<div class="t" id="t60" style="left:892.40px;top:819.5px;line-height:16px;letter-spacing:-0.450px;color:#cccccc;font-size:12px">UTF-8</div>
<div class="t" id="t61" style="left:940.80px;top:819.5px;line-height:16px;letter-spacing:-1.667px;color:#cccccc;font-size:12px">CRLF</div>
<div class="t" id="t62" style="left:983.00px;top:819.0px;line-height:16px;color:#cccccc;font-size:12px">{ }</div>
<div class="t" id="t63" style="left:1001.20px;top:819.5px;line-height:16px;letter-spacing:-1.200px;color:#cccccc;font-size:12px">Java</div>
</div>
</body>
</html>
